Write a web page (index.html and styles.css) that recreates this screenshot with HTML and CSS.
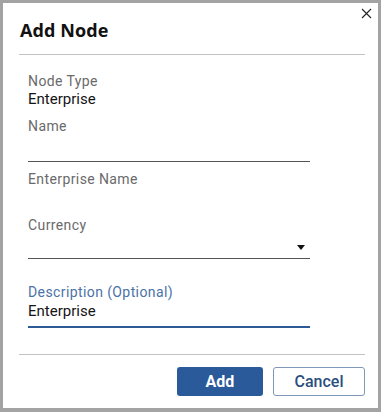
FILE: index.html
```html
<!DOCTYPE html>
<html>
<head>
<meta charset="utf-8">
<link rel="stylesheet" href="styles.css">
</head>
<body>
<div class="dialog">
  <button class="close" aria-label="Close">
    <svg width="11" height="11" viewBox="0 0 11 11"><path d="M1 1L10 10M10 1L1 10" stroke="#222" stroke-width="1.1" fill="none"/></svg>
  </button>
  <div class="header"><h2 class="title">Add Node</h2></div>
  <div class="body">
    <div class="label first">Node Type</div>
    <div class="value">Enterprise</div>
    <div class="label name">Name</div>
    <div class="input"></div>
    <div class="label helper">Enterprise Name</div>
    <div class="label currency">Currency</div>
    <div class="select">
      <svg class="arrow" width="8" height="5" viewBox="0 0 8 5"><path d="M0 0H8L4 5Z" fill="#111"/></svg>
    </div>
    <div class="label focus">Description (Optional)</div>
    <div class="value focused">Enterprise</div>
  </div>
  <div class="footer">
    <button class="btn primary">Add</button>
    <button class="btn secondary">Cancel</button>
  </div>
</div>
</body>
</html>
```
FILE: styles.css
```css
html, body {
  margin: 0;
  padding: 0;
}
body {
  background: #a3a3a3;
  width: 381px;
  height: 412px;
  padding: 3px 3px 4px 3px;
  box-sizing: border-box;
  font-family: Roboto, "Liberation Sans", sans-serif;
}
.dialog {
  position: relative;
  background: #fff;
  height: 405px;
  overflow: hidden;
}
.close {
  position: absolute;
  top: 4px;
  right: 5px;
  width: 13px;
  height: 13px;
  padding: 0;
  border: 0;
  background: none;
  display: flex;
  align-items: center;
  justify-content: center;
}
.header {
  margin: 0 13px 0 16px;
  padding: 15px 0 12px 1px;
  border-bottom: 1px solid #c2c2c2;
}
.title {
  margin: 0;
  font-family: "Open Sans", sans-serif;
  font-weight: 700;
  font-size: 18px;
  line-height: 24px;
  letter-spacing: 0.1px;
  color: #111;
}
.body {
  margin-left: 25px;
  width: 282px;
}
.label {
  font-size: 14px;
  line-height: 16px;
  color: #6a6a6a;
  letter-spacing: 0.4px;
}
.label.first { margin-top: 18px; }
.label.name { margin-top: 10px; }
.label.helper { margin-top: 9px; }
.label.currency { margin-top: 30px; }
.label.focus { margin-top: 25px; color: #4a72a6; }
.value {
  margin-top: 1px;
  font-size: 15px;
  line-height: 18px;
  color: #151515;
}
.value.focused {
  margin-top: 2px;
  padding-bottom: 6px;
  border-bottom: 2px solid #2b5a95;
}
.input {
  height: 27px;
  border-bottom: 1px solid #555;
}
.select {
  height: 25px;
  border-bottom: 1px solid #555;
  display: flex;
  justify-content: flex-end;
  align-items: flex-start;
}
.arrow {
  margin-top: 12px;
  margin-right: 5px;
}
.footer {
  margin: 26px 13px 0 16px;
  padding-top: 12px;
  border-top: 1px solid #c2c2c2;
  display: flex;
  justify-content: flex-end;
  gap: 10px;
}
.btn {
  height: 29px;
  font-family: Roboto, "Liberation Sans", sans-serif;
  font-size: 16px;
  border-radius: 3px;
  padding: 0;
  cursor: pointer;
}
.primary {
  width: 86px;
  background: #2a5a9a;
  border: 0;
  color: #fff;
  font-weight: 700;
}
.secondary {
  width: 92px;
  background: #fff;
  border: 1px solid #7f97b8;
  color: #2b4f7e;
  font-weight: 500;
}
```
